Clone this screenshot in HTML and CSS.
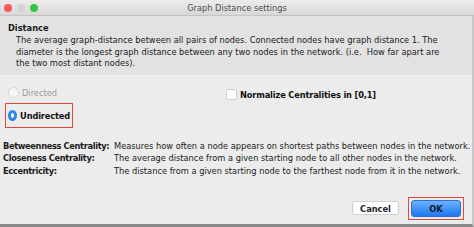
FILE: index.html
```html
<!DOCTYPE html>
<html>
<head>
<meta charset="utf-8">
<link rel="stylesheet" href="styles.css">
</head>
<body>
<div class="window">
  <div class="titlebar">
    <div class="lights">
      <span class="light red"></span>
      <span class="light gray"></span>
      <span class="light green"></span>
    </div>
    <div class="title">Graph Distance settings</div>
  </div>
  <div class="content">
    <div class="distance">
      <div class="heading">Distance</div>
      <div class="desc">The average graph-distance between all pairs of nodes. Connected nodes have graph distance 1. The<br>diameter is the longest graph distance between any two nodes in the network. (i.e.&nbsp; How far apart are<br>the two most distant nodes).</div>
    </div>
    <div class="options">
      <div class="col-left">
        <div class="opt disabled"><span class="radio"></span><span>Directed</span></div>
        <div class="opt selected-box"><span class="radio on"></span><span class="strong">Undirected</span></div>
      </div>
      <div class="col-right">
        <div class="opt"><span class="check"></span><span class="strong">Normalize Centralities in [0,1]</span></div>
      </div>
    </div>
    <div class="defs">
      <div class="term">Betweenness Centrality:</div><div class="def">Measures how often a node appears on shortest paths between nodes in the network.</div>
      <div class="term">Closeness Centrality:</div><div class="def">The average distance from a given starting node to all other nodes in the network.</div>
      <div class="term">Eccentricity:</div><div class="def">The distance from a given starting node to the farthest node from it in the network.</div>
    </div>
    <div class="footer">
      <button class="btn cancel">Cancel</button>
      <div class="ok-box"><button class="btn ok">OK</button></div>
    </div>
  </div>
</div>
</body>
</html>
```
FILE: styles.css
```css
html, body {
  margin: 0;
  padding: 0;
  background: #ededed;
}
body {
  font-family: "DejaVu Sans Condensed", "DejaVu Sans", sans-serif;
  font-size: 9.2px;
  color: #1a1a1a;
}
.window {
  width: 474px;
  height: 227px;
  display: flex;
  flex-direction: column;
  background: #ececec;
  overflow: hidden;
}
.titlebar {
  height: 15px;
  flex: none;
  display: flex;
  align-items: center;
  background: linear-gradient(#ececec, #d8d8d8);
  border-bottom: 1px solid #c4c4c4;
  position: relative;
}
.lights {
  display: flex;
  gap: 5px;
  padding-left: 4px;
}
.light {
  width: 8px;
  height: 8px;
  border-radius: 50%;
}
.light.red { background: #f25c55; }
.light.gray { background: #d2d2d2; }
.light.green { background: #33c748; }
.title {
  position: absolute;
  left: 0;
  right: 0;
  text-align: center;
  color: #4d4d4d;
}
.content {
  flex: 1;
  display: flex;
  flex-direction: column;
  border-right: 2px solid #c8c8c8;
  border-bottom: 3px solid #8a8a8a;
}
.distance {
  background: #e2e2e2;
  padding: 6px 8px 6px 8px;
  border-bottom: 1px solid #f4f4f4;
}
.heading {
  font-weight: bold;
  line-height: 12px;
}
.desc {
  padding-left: 8px;
  line-height: 11.5px;
  white-space: nowrap;
}
.options {
  display: flex;
  padding: 10px 0 0 5px;
}
.col-left {
  width: 218px;
  display: flex;
  flex-direction: column;
  gap: 3px;
}
.col-right {
  padding-top: 2px;
}
.opt {
  display: flex;
  align-items: center;
  gap: 3px;
  height: 14px;
  padding: 0 3px;
}
.opt.disabled {
  color: #9a9a9a;
}
.strong {
  color: #111;
  font-weight: bold;
  letter-spacing: -0.15px;
}
.selected-box {
  width: 62px;
  height: 23px;
  border: 1.5px solid #e0483d;
  padding: 0 2px;
}
.radio {
  width: 11px;
  height: 11px;
  border-radius: 50%;
  background: #f6f6f6;
  border: 1px solid #d6d6d6;
  box-sizing: border-box;
}
.radio.on {
  background: #fff;
  border: 3.5px solid #2f83f1;
}
.check {
  width: 11px;
  height: 11px;
  border-radius: 2px;
  background: #fff;
  border: 1px solid #cfcfcf;
  box-sizing: border-box;
}
.defs {
  display: grid;
  grid-template-columns: 111px auto;
  padding: 12px 0 0 3px;
  line-height: 12.7px;
  white-space: nowrap;
}
.term {
  font-weight: bold;
  letter-spacing: -0.35px;
}
.footer {
  margin-top: auto;
  display: flex;
  justify-content: flex-end;
  align-items: center;
  gap: 9px;
  padding: 0 8px 4px 0;
}
.btn {
  font-family: inherit;
  font-size: 9.2px;
  font-weight: bold;
  border-radius: 3px;
  padding: 0;
  cursor: default;
}
.cancel {
  width: 47px;
  height: 14px;
  background: #fff;
  border: 1px solid #d0d0d0;
  color: #222;
  margin-bottom: 1px;
}
.ok-box {
  border: 1.5px solid #e0483d;
  padding: 2px;
}
.ok {
  width: 50px;
  height: 17px;
  display: block;
  border: 1px solid #2a6fd6;
  background: linear-gradient(#6cb1fb, #1f78ee);
  color: #0c1a2c;
}
```
